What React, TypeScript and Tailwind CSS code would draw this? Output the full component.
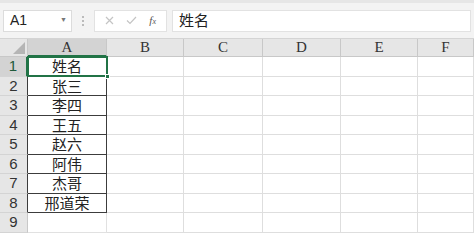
const cols = ["A", "B", "C", "D", "E", "F"];
const colWidths = ["w-[79px]", "w-[77px]", "w-[79px]", "w-[78px]", "w-[77px]", "flex-1"];
const names = ["姓名", "张三", "李四", "王五", "赵六", "阿伟", "杰哥", "邢道荣", ""];

const cjk = "font-['Noto_Sans_CJK_SC',sans-serif]";

function FormulaBar() {
  return (
    <div className="h-[38px] bg-[#f3f3f3] border-t-[3px] border-[#e6e6e6] flex items-center px-[3px] gap-0">
      {/* name box */}
      <div className="w-[69px] h-[22px] bg-white border border-[#dcdcdc] flex items-center justify-between pl-[6px] pr-[4px] font-['Liberation_Sans',sans-serif] text-[14px] text-[#222]">
        <span>A1</span>
        <span className="text-[7px] text-[#777]">▼</span>
      </div>
      <div className="w-[22px] flex flex-col items-center gap-[2px]">
        <span className="w-[2px] h-[2px] bg-[#bbb]" />
        <span className="w-[2px] h-[2px] bg-[#bbb]" />
        <span className="w-[2px] h-[2px] bg-[#bbb]" />
      </div>
      {/* buttons */}
      <div className="w-[73px] h-[22px] bg-white border border-[#e2e2e2] flex items-center justify-around px-[4px]">
        <svg width="9" height="9" viewBox="0 0 9 9">
          <path d="M1 1L8 8M8 1L1 8" stroke="#c4c4c4" strokeWidth="1.2" />
        </svg>
        <svg width="11" height="9" viewBox="0 0 11 9">
          <path d="M1 4.5L4 7.5L10 1" stroke="#c4c4c4" strokeWidth="1.2" fill="none" />
        </svg>
        <span className="font-['Liberation_Serif',serif] italic text-[11px] text-[#555]">
          f<span className="text-[8px]">x</span>
        </span>
      </div>
      <div className="w-[5px]" />
      {/* formula input */}
      <div className={`flex-1 h-[22px] bg-white border border-[#e2e2e2] flex items-center pl-[6px] text-[15px] text-[#222] ${cjk}`}>
        姓名
      </div>
    </div>
  );
}

export default function App() {
  return (
    <div className="w-[474px] h-[236px] overflow-hidden bg-white">
      <FormulaBar />
      {/* column headers */}
      <div className="h-[19px] flex bg-[#e6e6e6] border-t border-[#d4d4d4] font-['Liberation_Serif',serif] text-[15px] text-[#333]">
        <div className="w-[28px] relative border-r border-b border-[#c8c8c8]">
          <svg className="absolute right-[2px] bottom-[2px]" width="12" height="12" viewBox="0 0 12 12">
            <path d="M12 0L12 12L0 12Z" fill="#b5b5b5" />
          </svg>
        </div>
        {cols.map((c, i) => (
          <div
            key={c}
            className={`${colWidths[i]} flex items-center justify-center border-r ${
              i === 0 ? "bg-[#d3d3d3] border-b-2 border-b-[#217346] border-r-[#c8c8c8]" : "border-b border-[#c8c8c8]"
            }`}
          >
            {c}
          </div>
        ))}
      </div>
      {/* rows */}
      <div className="relative">
        {names.map((n, r) => {
          const inBox = r < 8;
          return (
            <div key={r} className="h-[19.5px] flex">
              <div
                className={`w-[28px] flex items-center justify-center font-['Liberation_Sans',sans-serif] text-[15px] border-b border-[#d4d4d4] ${
                  r === 0
                    ? "bg-[#d3d3d3] text-[#1f5a3a] border-r-2 border-r-[#217346]"
                    : inBox
                    ? "bg-[#e6e6e6] text-[#333] border-r border-r-[#3c3c3c]"
                    : "bg-[#e6e6e6] text-[#333] border-r border-r-[#c8c8c8]"
                }`}
              >
                {r + 1}
              </div>
              <div
                className={`w-[79px] flex items-center justify-center text-[15px] text-[#222] ${cjk} ${
                  inBox ? "border-r border-b border-[#3c3c3c]" : "border-r border-b border-[#e1e1e1]"
                }`}
              >
                {n}
              </div>
              {colWidths.slice(1).map((w, i) => (
                <div key={i} className={`${w} border-r border-b border-[#dedede]`} />
              ))}
            </div>
          );
        })}
        {/* active cell */}
        <div className="absolute left-[27px] top-[-1px] w-[81px] h-[21px] border-2 border-[#217346]">
          <div className="absolute right-[-4px] bottom-[-4px] w-[5px] h-[5px] bg-[#217346] border border-white" />
        </div>
      </div>
    </div>
  );
}
